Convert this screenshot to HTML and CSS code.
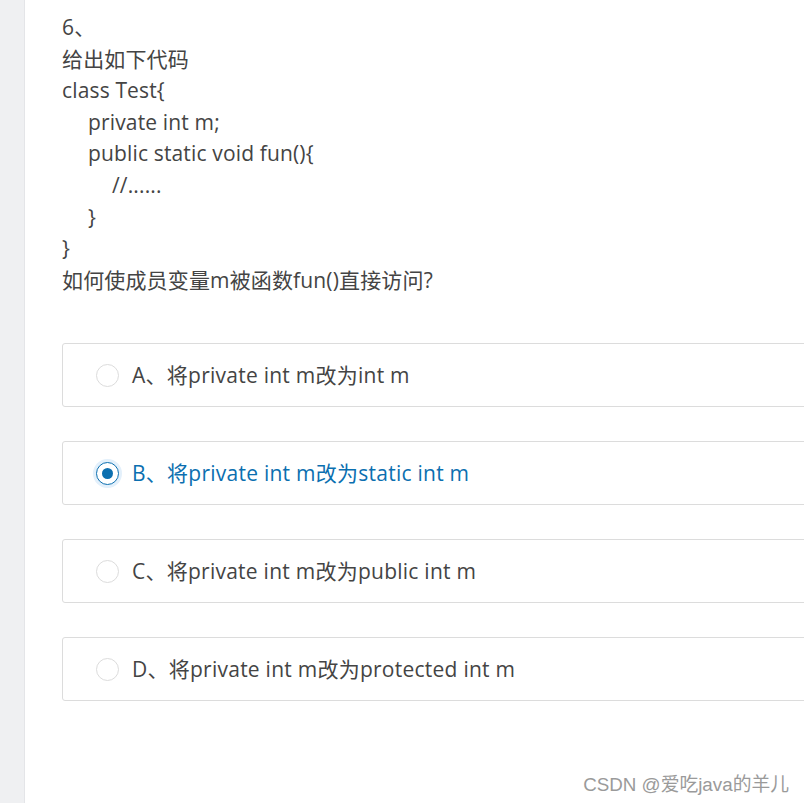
FILE: index.html
```html
<!DOCTYPE html>
<html lang="zh">
<head>
<meta charset="utf-8">
<link rel="stylesheet" href="styles.css">
</head>
<body>
<div class="page">
  <div class="side"></div>
  <div class="main">
    <div class="question">
      <div class="line">6、</div>
      <div class="line">给出如下代码</div>
      <div class="line">class Test{</div>
      <div class="line i1">private int m;</div>
      <div class="line i1">public static void fun(){</div>
      <div class="line i2">//......</div>
      <div class="line i1">}</div>
      <div class="line">}</div>
      <div class="line">如何使成员变量m被函数fun()直接访问?</div>
    </div>
    <div class="options">
      <div class="option"><span class="radio"></span><span class="label">A、将private int m改为int m</span></div>
      <div class="option selected"><span class="radio"></span><span class="label">B、将private int m改为static int m</span></div>
      <div class="option"><span class="radio"></span><span class="label">C、将private int m改为public int m</span></div>
      <div class="option"><span class="radio"></span><span class="label">D、将private int m改为protected int m</span></div>
    </div>
  </div>
</div>
<div class="watermark">CSDN @爱吃java的羊儿</div>
</body>
</html>
```

FILE: styles.css
```css
html, body {
  margin: 0;
  padding: 0;
  background: #ffffff;
  overflow: hidden;
}
.page {
  display: flex;
  min-height: 803px;
  width: 900px;
}
.side {
  width: 24px;
  flex: none;
  background: #eff0f2;
  border-right: 1px solid #e4e5e8;
}
.main {
  flex: 1;
  padding: 12px 0 0 37px;
  font-family: "Open Sans", "Noto Sans CJK SC", sans-serif;
  font-size: 21px;
  color: #444444;
}
.line {
  line-height: 31.6px;
  height: 31.6px;
  white-space: nowrap;
  letter-spacing: 0.15px;
}
.i1 { padding-left: 26px; }
.i2 { padding-left: 50px; }
.options {
  margin-top: 47px;
  display: flex;
  flex-direction: column;
  gap: 34px;
}
.option {
  height: 62px;
  border: 1px solid #dcdcdc;
  border-radius: 3px;
  display: flex;
  align-items: center;
  padding-left: 33px;
  box-sizing: content-box;
}
.radio {
  width: 21px;
  height: 21px;
  border: 1px solid #dcdcdc;
  border-radius: 50%;
  box-sizing: content-box;
  flex: none;
  background: #fff;
  position: relative;
}
.label {
  margin-left: 13px;
  white-space: nowrap;
  line-height: 30px;
  letter-spacing: 0.25px;
}
.selected .label { color: #0b6fb0; }
.selected .radio {
  border-color: #0b6fb0;
  box-shadow: 0 0 0 3px #e3f0fb;
}
.selected .radio::after {
  content: "";
  position: absolute;
  left: 5px;
  top: 5px;
  width: 11px;
  height: 11px;
  border-radius: 50%;
  background: #0b6fb0;
}
.watermark {
  position: absolute;
  right: 15px;
  top: 769px;
  font-family: "Liberation Sans", "Noto Sans CJK SC", sans-serif;
  font-size: 18.8px;
  color: #9a9a9a;
  text-shadow: 0 0 2px #ffffff, 0 0 1px #ffffff;
  white-space: nowrap;
}
```
